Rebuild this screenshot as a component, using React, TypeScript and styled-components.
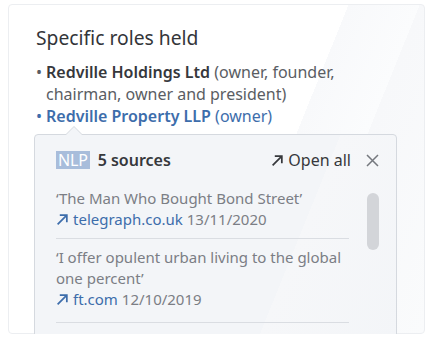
import styled, { createGlobalStyle } from "styled-components";

const Global = createGlobalStyle`
  html, body {
    margin: 0;
    background: #ffffff;
    overflow: hidden;
  }
  body {
    font-family: "Noto Sans", "Open Sans", sans-serif;
  }
`;

const Card = styled.div`
  box-sizing: border-box;
  margin: 4px 8px 0;
  height: 330px;
  border: 1px solid #eceef1;
  border-radius: 4px;
  padding: 19px 0 0 27px;
  background: linear-gradient(
    112deg,
    #ffffff 0%,
    #ffffff 62%,
    #f8f9fb 62%,
    #fbfcfd 75%,
    #f7f8fa 75%,
    #fafbfc 100%
  );
`;

const Title = styled.h2`
  margin: 0;
  font-size: 19.3px;
  line-height: 28px;
  font-weight: 400;
  color: #333539;
`;

const Roles = styled.ul`
  margin: 9px 0 0;
  padding: 0;
  list-style: none;
  font-size: 16px;
  line-height: 22px;
`;

const Role = styled.li<{ $link?: boolean }>`
  display: flex;
  color: ${(p) => (p.$link ? "#3d6dab" : "#5a5d63")};
  width: 330px;
`;

const Dot = styled.span`
  flex: 0 0 10px;
`;

const Name = styled.b<{ $link?: boolean }>`
  font-weight: 600;
  color: ${(p) => (p.$link ? "#3d6dab" : "#36383c")};
`;

const Popover = styled.div`
  position: relative;
  box-sizing: border-box;
  margin: 7px 0 0 -2px;
  width: 363px;
  height: 220px;
  border: 1px solid #d5d9df;
  border-radius: 4px;
  background: linear-gradient(112deg, #f3f5f8 0%, #f3f5f8 68%, #f6f7f9 68%, #f3f5f8 100%);
  padding: 13px 17px 0 21px;

  &::before,
  &::after {
    content: "";
    position: absolute;
    left: 30px;
    width: 0;
    height: 0;
    border-left: 9px solid transparent;
    border-right: 9px solid transparent;
  }
  &::before {
    top: -9px;
    border-bottom: 9px solid #d5d9df;
  }
  &::after {
    top: -8px;
    border-bottom: 9px solid #f3f5f8;
  }
`;

const Header = styled.div`
  display: flex;
  align-items: center;
  height: 24px;
`;

const Badge = styled.span`
  background: #a8bddb;
  color: #ffffff;
  font-size: 16px;
  line-height: 18px;
  padding: 0 2px;
  letter-spacing: -0.2px;
`;

const Count = styled.span`
  margin-left: 8px;
  font-size: 16px;
  font-weight: 600;
  color: #36383c;
`;

const OpenAll = styled.span`
  margin-left: auto;
  display: flex;
  align-items: center;
  gap: 4px;
  font-size: 16px;
  color: #36383c;
`;

const Close = styled.span`
  margin-left: 15px;
  display: flex;
`;

const Items = styled.div`
  margin-top: 16px;
  width: 293px;
`;

const Item = styled.div`
  padding: 0 0 8px;
  margin-bottom: 8px;
  border-bottom: 1px solid #dadde2;
  font-size: 15px;
  line-height: 21px;
  color: #7b7e85;
  &:nth-child(2) {
    padding-bottom: 12px;
  }
`;

const Source = styled.div`
  display: flex;
  align-items: center;
  gap: 4px;
`;

const Link = styled.span`
  color: #3d6dab;
`;

const Scroll = styled.div`
  position: absolute;
  right: 17px;
  top: 58px;
  width: 12px;
  height: 57px;
  border-radius: 6px;
  background: #d3d5d9;
`;

function Arrow({ color, size }: { color: string; size: number }) {
  return (
    <svg width={size} height={size} viewBox="0 0 12 12" fill="none">
      <path d="M1.5 10.5 L10 2 M3.5 2 H10 V8.5" stroke={color} strokeWidth="1.6" />
    </svg>
  );
}

const sources = [
  { title: "\u2018The Man Who Bought Bond Street\u2019", site: "telegraph.co.uk", date: "13/11/2020" },
  { title: "\u2018I offer opulent urban living to the global one percent\u2019", site: "ft.com", date: "12/10/2019" },
];

export default function App() {
  return (
    <>
      <Global />
      <Card>
        <Title>Specific roles held</Title>
        <Roles>
          <Role>
            <Dot>•</Dot>
            <span>
              <Name>Redville Holdings Ltd</Name> (owner, founder, chairman, owner and president)
            </span>
          </Role>
          <Role $link>
            <Dot>•</Dot>
            <span>
              <Name $link>Redville Property LLP</Name> (owner)
            </span>
          </Role>
        </Roles>
        <Popover>
          <Header>
            <Badge>NLP</Badge>
            <Count>5 sources</Count>
            <OpenAll>
              <Arrow color="#36383c" size={13} />
              Open all
            </OpenAll>
            <Close>
              <svg width="13" height="13" viewBox="0 0 13 13">
                <path d="M1 1 L12 12 M12 1 L1 12" stroke="#75787e" strokeWidth="1.5" />
              </svg>
            </Close>
          </Header>
          <Items>
            {sources.map((s) => (
              <Item key={s.site}>
                <div>{s.title}</div>
                <Source>
                  <Arrow color="#3d6dab" size={13} />
                  <span>
                    <Link>{s.site}</Link> {s.date}
                  </span>
                </Source>
              </Item>
            ))}
          </Items>
          <Scroll />
        </Popover>
      </Card>
    </>
  );
}
